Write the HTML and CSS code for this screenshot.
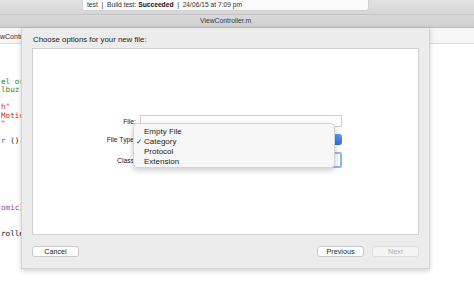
FILE: index.html
```html
<!DOCTYPE html>
<html>
<head>
<meta charset="utf-8">
<link rel="stylesheet" href="styles.css">
</head>
<body>
<div class="screen">
  <div class="toolbar">
    <div class="status">test &nbsp;|&nbsp; Build test: <b>Succeeded</b> &nbsp;|&nbsp; 24/06/15 at 7:09 pm</div>
  </div>
  <div class="tabbar">ViewController.m</div>
  <div class="editor">
    <div class="jumpbar">wContr</div>
    <div class="code">
      <div class="ln"></div>
      <div class="ln"></div>
      <div class="ln"></div>
      <div class="ln"></div>
      <div class="ln green">el or</div>
      <div class="ln green">lbuz.</div>
      <div class="ln"></div>
      <div class="ln red">h"</div>
      <div class="ln red">Motic</div>
      <div class="ln red">"</div>
      <div class="ln"></div>
      <div class="ln"><span class="blue">r</span> ()</div>
      <div class="ln"></div>
      <div class="ln"></div>
      <div class="ln"></div>
      <div class="ln"></div>
      <div class="ln"></div>
      <div class="ln"></div>
      <div class="ln"></div>
      <div class="ln"><span class="purple">omic</span>)</div>
      <div class="ln"></div>
      <div class="ln"></div>
      <div class="ln">rolle</div>
    </div>
  </div>

  <div class="sheet">
    <div class="sheet-title">Choose options for your new file:</div>
    <div class="panel">
      <div class="form">
        <div class="label">File:</div>
        <div class="field"></div>
        <div class="label">File Type:</div>
        <div class="popup"><span class="popup-arrow"></span></div>
        <div class="label">Class:</div>
        <div class="field focused"></div>
      </div>
      <div class="menu">
        <div class="item">Empty File</div>
        <div class="item checked"><span class="check">✓</span>Category</div>
        <div class="item">Protocol</div>
        <div class="item">Extension</div>
      </div>
    </div>
    <div class="footer">
      <div class="btn">Cancel</div>
      <div class="spacer"></div>
      <div class="btn">Previous</div>
      <div class="btn disabled">Next</div>
    </div>
  </div>
</div>
</body>
</html>
```

FILE: styles.css
```css
* { box-sizing: border-box; }
html, body { margin: 0; padding: 0; background: #ffffff; }
body { font-family: "Liberation Sans", Arial, sans-serif; }
.screen {
  position: relative;
  width: 474px;
  height: 306px;
  overflow: hidden;
  background: #ffffff;
}
.toolbar {
  height: 15px;
  background: linear-gradient(#e2e2e2, #d6d6d6);
  border-bottom: 1px solid #c4c4c4;
  padding-left: 82px;
}
.status {
  width: 287px;
  height: 11px;
  background: #fbfbfb;
  border: 1px solid #d2d2d2;
  border-top: none;
  border-radius: 0 0 3px 3px;
  font-size: 6.7px;
  line-height: 10px;
  color: #333;
  padding-left: 4px;
  white-space: nowrap;
}
.status b { color: #111; }
.tabbar {
  height: 13px;
  background: linear-gradient(#d9d9d9, #cfcfcf);
  border-bottom: 1px solid #b9b9b9;
  font-size: 6.8px;
  line-height: 12px;
  color: #3a3a3a;
  padding-left: 200px;
}
.editor { background: #fff; }
.jumpbar {
  height: 16px;
  background: #f6f6f6;
  border-bottom: 1px solid #d9d9d9;
  font-size: 7px;
  line-height: 16px;
  padding-top: 1px;
  color: #333;
  padding-left: 0;
}
.code {
  font-family: "DejaVu Sans Mono", "Liberation Mono", monospace;
  font-size: 7.6px;
  color: #222;
  padding-left: 1px;
}
.ln { height: 8.45px; line-height: 8.45px; white-space: pre; }
.green { color: #2e8a24; }
.red { color: #cf2a22; }
.blue { color: #4a57b8; }
.purple { color: #9a3fa6; }

.sheet {
  position: absolute;
  left: 21px;
  top: 28px;
  width: 409px;
  height: 241px;
  background: #ececec;
  border: 1px solid #d3d3d3;
  border-top: none;
  box-shadow: 0 2px 5px rgba(0,0,0,0.18);
  display: flex;
  flex-direction: column;
  padding: 0 10px 0 10px;
}
.sheet-title {
  height: 20px;
  padding-top: 8px;
  padding-left: 1px;
  font-size: 7.8px;
  line-height: 8px;
  color: #222;
}
.panel {
  position: relative;
  height: 187px;
  background: #fff;
  border: 1px solid #cfcfcf;
}
.form {
  display: grid;
  grid-template-columns: 103px 202px;
  column-gap: 4px;
  row-gap: 7px;
  padding-top: 66px;
  align-items: center;
}
.label {
  text-align: right;
  font-size: 6.8px;
  color: #222;
  white-space: nowrap;
}
.field {
  height: 12px;
  background: #fff;
  border: 1px solid #d0d0d0;
}
.field.focused {
  height: 16px;
  border: 2px solid #8dbcf0;
  border-radius: 2px;
}
.popup {
  height: 11px;
  background: #fff;
  border: 1px solid #c8c8c8;
  border-radius: 3px;
  position: relative;
}
.popup-arrow {
  position: absolute;
  right: -1px;
  top: -1px;
  width: 8px;
  height: 11px;
  background: linear-gradient(#5a9cf0, #2f6fd6);
  border-radius: 0 3px 3px 0;
}
.menu {
  position: absolute;
  left: 100px;
  top: 74px;
  width: 202px;
  height: 45px;
  background: rgba(247,247,247,0.98);
  border: 1px solid #d4d4d4;
  border-radius: 4px;
  box-shadow: 0 2px 6px rgba(0,0,0,0.22);
  padding-top: 3px;
}
.item {
  position: relative;
  height: 10px;
  line-height: 10px;
  font-size: 8px;
  color: #222;
  padding-left: 10px;
}
.check {
  position: absolute;
  left: 2px;
  top: 0;
  font-family: "DejaVu Sans", sans-serif;
  font-size: 7.5px;
  font-weight: bold;
}
.footer {
  display: flex;
  align-items: flex-start;
  gap: 8px;
  padding-top: 11px;
}
.spacer { flex: 1; }
.btn {
  width: 47px;
  height: 11px;
  background: #fff;
  border: 1px solid #c9c9c9;
  border-radius: 3px;
  font-size: 7.2px;
  line-height: 9px;
  text-align: center;
  color: #222;
}
.btn.disabled {
  background: #f4f4f4;
  border-color: #dddddd;
  color: #b2b2b2;
}
```
